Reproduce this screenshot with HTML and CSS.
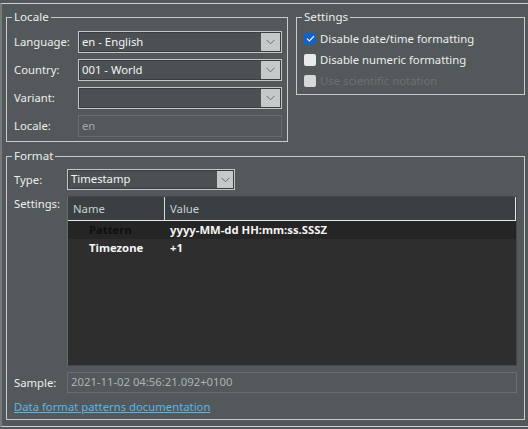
FILE: index.html
```html
<!DOCTYPE html>
<html>
<head>
<meta charset="utf-8">
<link rel="stylesheet" href="styles.css">
</head>
<body>
<div class="frame">
  <div class="top-row">
    <fieldset class="group locale">
      <legend>Locale</legend>
      <div class="form-grid">
        <label class="lbl">Language:</label>
        <div class="combo"><span class="combo-text">en - English</span><span class="combo-btn"><svg width="9" height="6" viewBox="0 0 9 6"><path d="M0.5 0.8 L4.5 4.8 L8.5 0.8" fill="none" stroke="#6b6e70" stroke-width="1"/></svg></span></div>
        <label class="lbl">Country:</label>
        <div class="combo"><span class="combo-text">001 - World</span><span class="combo-btn"><svg width="9" height="6" viewBox="0 0 9 6"><path d="M0.5 0.8 L4.5 4.8 L8.5 0.8" fill="none" stroke="#6b6e70" stroke-width="1"/></svg></span></div>
        <label class="lbl">Variant:</label>
        <div class="combo"><span class="combo-text"></span><span class="combo-btn"><svg width="9" height="6" viewBox="0 0 9 6"><path d="M0.5 0.8 L4.5 4.8 L8.5 0.8" fill="none" stroke="#6b6e70" stroke-width="1"/></svg></span></div>
        <label class="lbl">Locale:</label>
        <div class="field disabled">en</div>
      </div>
    </fieldset>
    <fieldset class="group settings">
      <legend>Settings</legend>
      <div class="checks">
        <div class="check"><span class="box checked"><svg width="9" height="7" viewBox="0 0 9 7"><path d="M1 3.6 L3.4 6 L8 1.2" fill="none" stroke="#ffffff" stroke-width="1.1"/></svg></span><span>Disable date/time formatting</span></div>
        <div class="check"><span class="box"></span><span>Disable numeric formatting</span></div>
        <div class="check off"><span class="box"></span><span>Use scientific notation</span></div>
      </div>
    </fieldset>
  </div>
  <fieldset class="group format">
    <legend>Format</legend>
    <div class="format-grid">
      <label class="lbl">Type:</label>
      <div class="combo type"><span class="combo-text">Timestamp</span><span class="combo-btn"><svg width="9" height="6" viewBox="0 0 9 6"><path d="M0.5 0.8 L4.5 4.8 L8.5 0.8" fill="none" stroke="#6b6e70" stroke-width="1"/></svg></span></div>
      <label class="lbl top">Settings:</label>
      <div class="table">
        <div class="thead">
          <div class="th c1">Name</div>
          <div class="th c2">Value</div>
        </div>
        <div class="tr sel">
          <div class="td c1 dark">Pattern</div>
          <div class="td c2">yyyy-MM-dd HH:mm:ss.SSSZ</div>
        </div>
        <div class="tr">
          <div class="td c1">Timezone</div>
          <div class="td c2">+1</div>
        </div>
      </div>
      <label class="lbl">Sample:</label>
      <div class="field sample">2021-11-02 04:56:21.092+0100</div>
      <a class="link" href="#">Data format patterns documentation</a>
    </div>
  </fieldset>
</div>
</body>
</html>
```

FILE: styles.css
```css
html, body {
  margin: 0;
  padding: 0;
  background: #53585a;
}
body {
  font-family: "Noto Sans", "Open Sans", sans-serif;
  font-size: 11.3px;
  color: #eceeef;
  width: 528px;
  height: 429px;
  overflow: hidden;
}
.frame {
  margin-top: 3px;
  border-top: 1px solid #cdd0d1;
  border-bottom: 1px solid #cdd0d1;
  border-left: 2px solid #767a7c;
  padding: 0 3px 6px 4px;
}
.top-row {
  display: flex;
  align-items: flex-start;
  gap: 8px;
  margin-top: 5px;
}
.group {
  margin: 0;
  border: 1px solid #c9cccd;
  padding: 0 5px 0 5px;
  min-width: 0;
  box-sizing: border-box;
}
.group legend {
  padding: 0 2px;
  line-height: 16px;
  color: #eceeef;
  font-size: 11.6px;
}
.locale {
  width: 282px;
  flex: none;
}
.settings {
  flex: 1;
}
.form-grid {
  display: grid;
  grid-template-columns: 64px 1fr;
  grid-auto-rows: 22px;
  row-gap: 6px;
  align-items: center;
  padding: 6px 0 4px 2px;
}
.lbl {
  line-height: 16px;
  white-space: nowrap;
}
.lbl.top {
  align-self: start;
}
.combo {
  display: flex;
  height: 22px;
  box-sizing: border-box;
  border: 1px solid #c3c6c7;
  box-shadow: inset 0 0 0 1px #3a3e40;
  background: #4b5053;
}
.combo-text {
  flex: 1;
  padding-left: 3px;
  line-height: 19px;
  color: #f2f3f3;
  white-space: nowrap;
}
.combo-btn {
  width: 19px;
  margin: 1px 1px 1px 0;
  background: #c6c9ca;
  display: flex;
  align-items: center;
  justify-content: center;
}
.field {
  box-sizing: border-box;
  height: 22px;
  border: 1px solid #676c6e;
  padding-left: 3px;
  line-height: 19px;
  white-space: nowrap;
}
.field.disabled {
  color: #a3a7a9;
}
.checks {
  display: flex;
  flex-direction: column;
  padding: 3px 0 3px 2px;
}
.check {
  display: flex;
  align-items: center;
  gap: 4px;
  height: 21px;
  white-space: nowrap;
}
.box {
  width: 12px;
  height: 12px;
  border-radius: 2px;
  background: #e9eaeb;
  display: flex;
  align-items: center;
  justify-content: center;
  flex: none;
}
.box.checked {
  background: #1263c6;
}
.check.off {
  color: #6c7173;
}
.check.off .box {
  background: #d5d7d8;
}
.format {
  margin-top: 6px;
  padding-right: 7px;
}
.format-grid {
  display: grid;
  grid-template-columns: 53px 1fr;
  grid-template-rows: 21px 170px 21px auto;
  row-gap: 6px;
  align-items: center;
  padding: 5px 0 4px 2px;
}
.combo.type {
  width: 168px;
  height: 21px;
}
.combo.type .combo-text {
  line-height: 18px;
}
.combo.type .combo-btn {
  width: 16px;
}
.table {
  align-self: stretch;
  box-sizing: border-box;
  width: 450px;
  height: 170px;
  border: 1px solid #44484a;
  border-left-color: #666b6d;
  background: #2e2e2e;
}
.thead {
  display: flex;
  height: 23px;
  border-bottom: 1px solid #e4e6e7;
  background: #3a3f42;
  color: #c9d0d3;
}
.th {
  line-height: 23px;
  padding-left: 5px;
  box-sizing: border-box;
}
.c1 {
  width: 97px;
  flex: none;
}
.c2 {
  flex: 1;
}
.th.c1 {
  border-right: 1px solid #d6d9da;
}
.th.c2 {
  border-right: 1px solid #e4e6e7;
}
.tr {
  display: flex;
  height: 18px;
  font-weight: bold;
  color: #f4f4f4;
}
.tr.sel {
  background: #252525;
}
.td {
  line-height: 18px;
  white-space: nowrap;
}
.td.c1 {
  padding-left: 21px;
  box-sizing: border-box;
}
.td.c2 {
  padding-left: 5px;
}
.td.dark {
  color: #0f0f0f;
}
.field.sample {
  width: 450px;
  height: 21px;
  line-height: 18px;
  color: #aeb2b4;
  border-color: #686d6f;
}
.link {
  grid-column: 1 / 3;
  color: #5bb6e6;
  text-decoration: underline;
  line-height: 16px;
  justify-self: start;
}
```
